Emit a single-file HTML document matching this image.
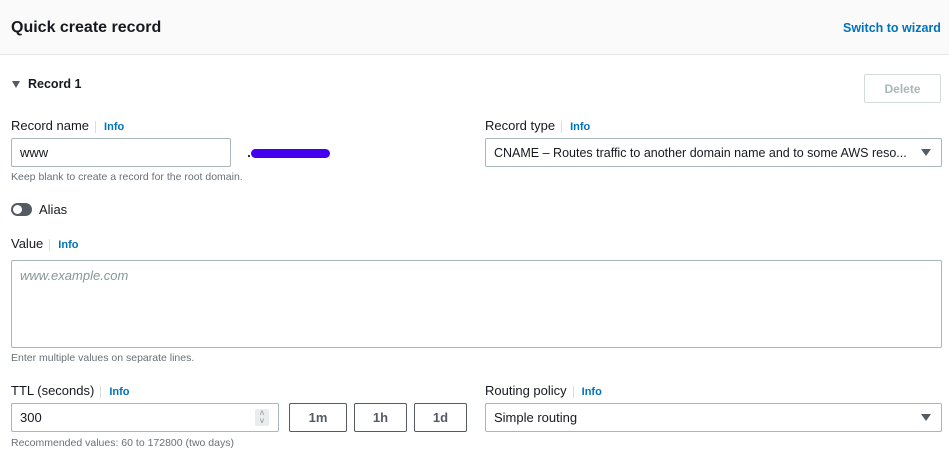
<!DOCTYPE html><html><head><style>
*{box-sizing:border-box;margin:0;padding:0}
body{width:949px;height:460px;background:#fff;font-family:"Liberation Sans",sans-serif;color:#16191f;position:relative;overflow:hidden;font-size:13px}
.a{position:absolute}
.hdr{left:0;top:0;width:949px;height:55px;background:#fafafa;border-bottom:1px solid #e5e5e5}
.lbl{font-size:13px;color:#16191f}
.info{color:#0073bb;font-weight:bold;font-size:11px;border-left:1px solid #ddd;padding-left:8px;margin-left:6px}
.in{border:1px solid #aab7b8;background:#fff;border-radius:2px;font-size:13px;padding-left:8px;display:flex;align-items:center}
.hint{font-size:10.5px;color:#687078}
.btn{border:1px solid #545b64;border-radius:2px;font-weight:bold;font-size:13px;color:#545b64;display:flex;align-items:center;justify-content:center}
.tri{width:0;height:0;border-left:5px solid transparent;border-right:5px solid transparent;border-top:7px solid #545b64}
</style></head><body>
<div class="a hdr"></div>
<div class="a" style="left:11px;top:19px;font-size:16px;font-weight:bold">Quick create record</div>
<div class="a" style="left:843px;top:21px;font-size:12.5px;font-weight:bold;color:#0073bb">Switch to wizard</div>
<div class="a" style="left:12px;top:81px;width:0;height:0;border-left:4px solid transparent;border-right:4px solid transparent;border-top:7px solid #545b64"></div>
<div class="a" style="left:28px;top:77px;font-size:12.5px;font-weight:bold">Record 1</div>
<div class="a btn" style="left:864px;top:74px;width:77px;height:29px;border-color:#d5dbdb;color:#aab7b8;font-size:12px">Delete</div>
<div class="a lbl" style="left:11px;top:118px">Record name<span class="info">Info</span></div>
<div class="a in" style="left:11px;top:138px;width:220px;height:29px">www</div>
<div class="a" style="left:248px;top:155px;width:2px;height:2px;background:#333"></div>
<div class="a" style="left:251px;top:149px;width:79px;height:9px;background:#4400ee;border-radius:5px"></div>
<div class="a hint" style="left:11px;top:171px">Keep blank to create a record for the root domain.</div>
<div class="a" style="left:11px;top:203px;width:21px;height:13px;border-radius:7px;background:#545b64"></div>
<div class="a" style="left:13px;top:205px;width:9px;height:9px;border-radius:50%;background:#fff"></div>
<div class="a lbl" style="left:39px;top:202px">Alias</div>
<div class="a lbl" style="left:11px;top:236px">Value<span class="info">Info</span></div>
<div class="a in" style="left:11px;top:260px;width:931px;height:88px;align-items:flex-start;padding-top:7px;color:#879596;font-style:italic">www.example.com</div>
<div class="a hint" style="left:11px;top:352px">Enter multiple values on separate lines.</div>
<div class="a lbl" style="left:11px;top:383px">TTL (seconds)<span class="info">Info</span></div>
<div class="a in" style="left:11px;top:403px;width:268px;height:29px">300</div>
<div class="a" style="left:255px;top:409px;width:14px;height:17px;background:#eaeded;border-radius:2px;color:#879596;font-size:9px;text-align:center;line-height:8px">˄<br>˅</div>
<div class="a btn" style="left:289px;top:403px;width:58px;height:29px">1m</div>
<div class="a btn" style="left:354px;top:403px;width:53px;height:29px">1h</div>
<div class="a btn" style="left:414px;top:403px;width:53px;height:29px">1d</div>
<div class="a hint" style="left:11px;top:437px">Recommended values: 60 to 172800 (two days)</div>
<div class="a lbl" style="left:485px;top:118px">Record type<span class="info">Info</span></div>
<div class="a in" style="left:485px;top:138px;width:457px;height:29px;font-size:12.5px">CNAME – Routes traffic to another domain name and to some AWS reso...</div>
<div class="a tri" style="left:921px;top:149px"></div>
<div class="a lbl" style="left:485px;top:383px">Routing policy<span class="info">Info</span></div>
<div class="a in" style="left:485px;top:403px;width:457px;height:29px">Simple routing</div>
<div class="a tri" style="left:921px;top:414px"></div>
</body></html>
